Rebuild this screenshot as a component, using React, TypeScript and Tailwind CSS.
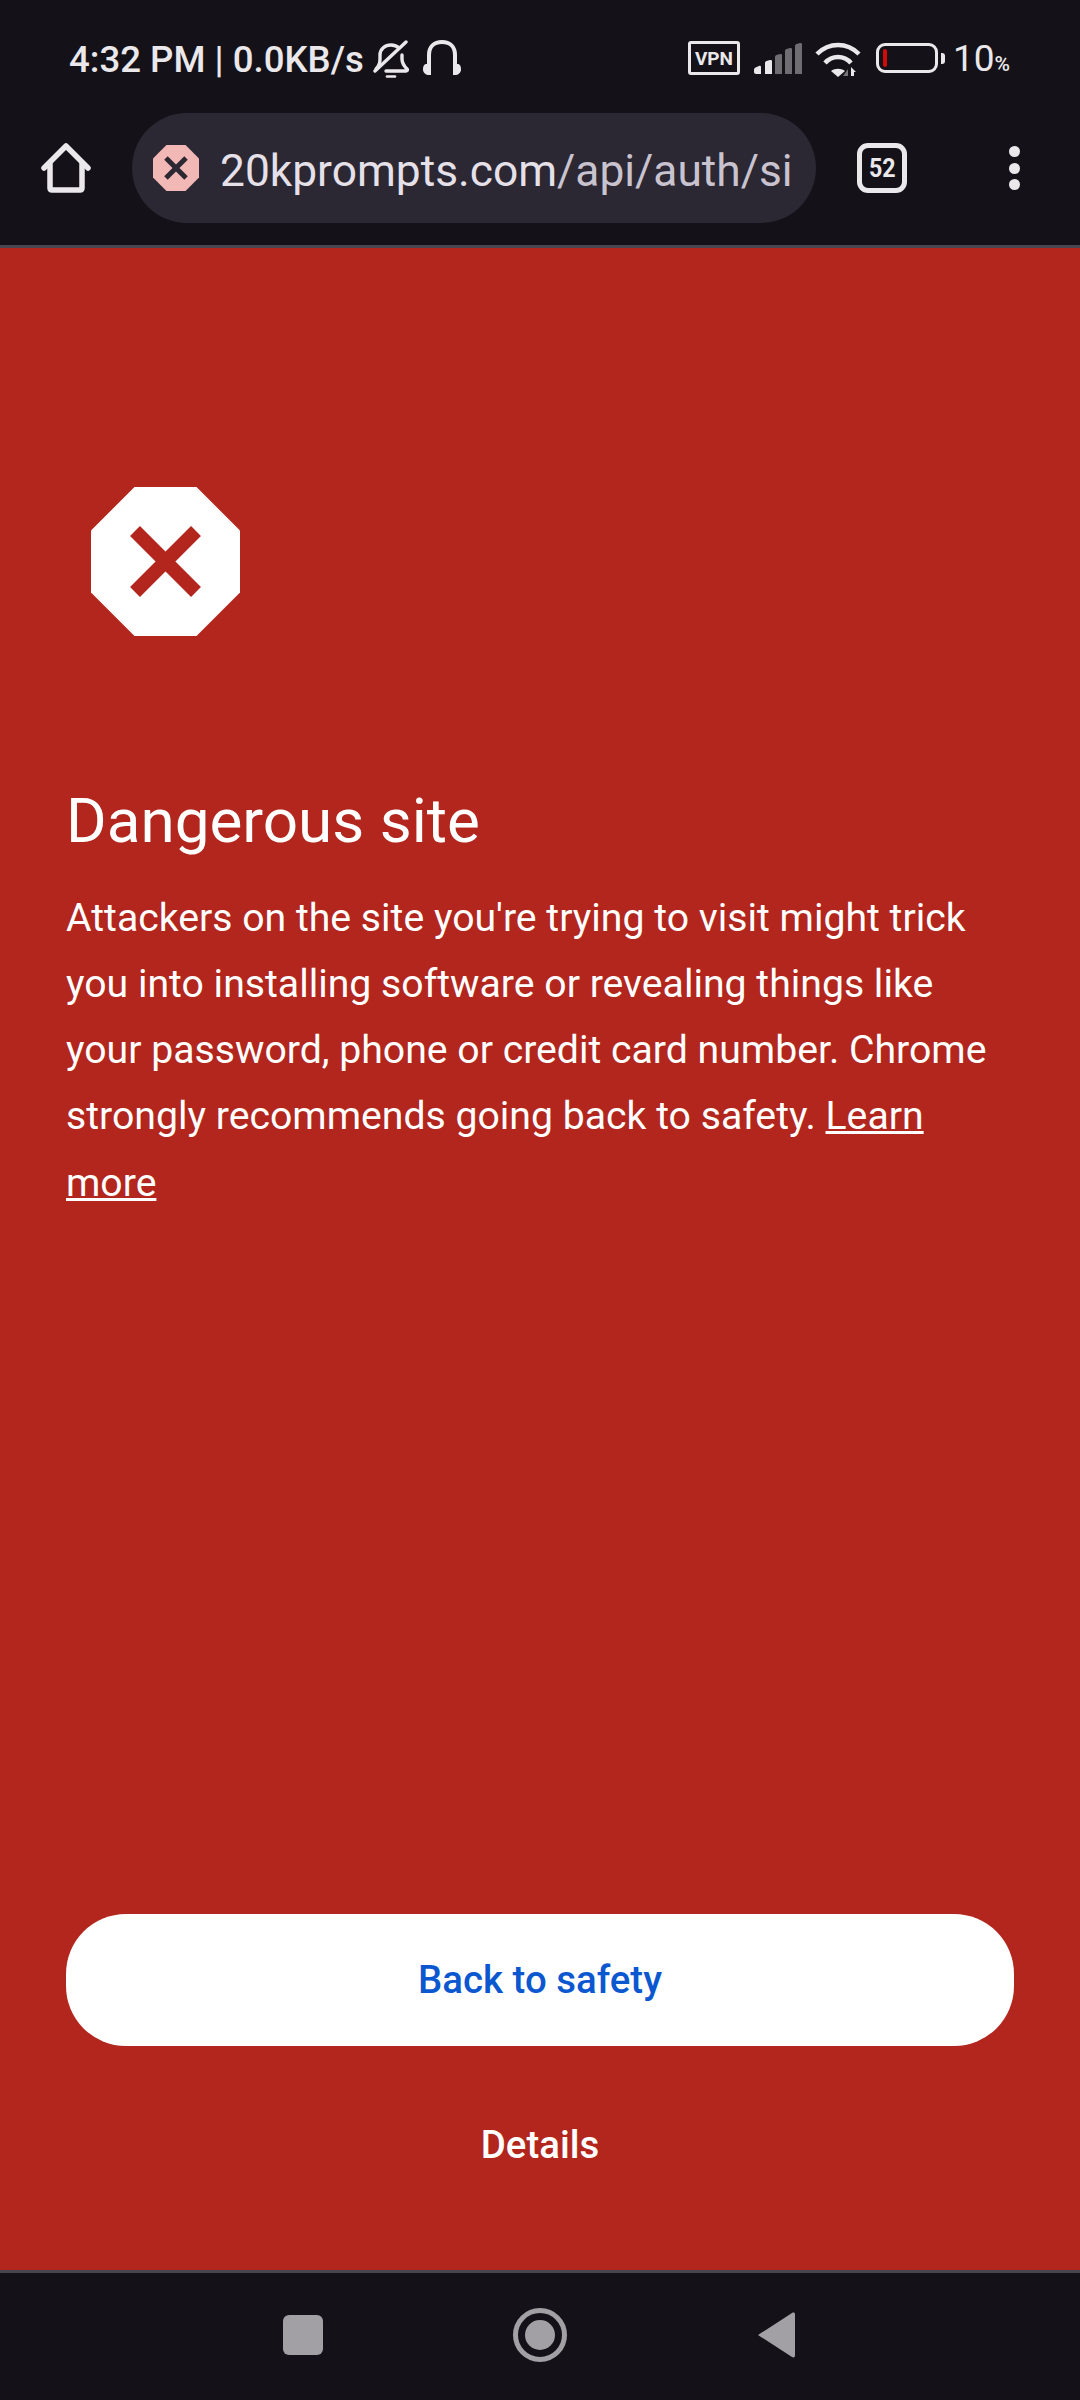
import React from 'react'

const roboto = "font-['Roboto',sans-serif]"

function BellOff() {
  return (
    <svg width="36" height="38" viewBox="0 0 36 38" fill="none" stroke="#ebe8ec" strokeWidth="3.4" strokeLinecap="round" strokeLinejoin="round">
      <path d="M3 29c3-3 4-6 4-10v-4c0-6 5-10 11-10 3 0 6 1 8 3" />
      <path d="M29 15v4c0 4 2 7 5 10 1 1 0 2-1 2H13" />
      <path d="M2 31L33 2" />
      <path d="M14 36.500h8" strokeWidth="2.6" />
    </svg>
  )
}

function Headphones() {
  return (
    <svg width="38" height="36" viewBox="0 0 38 36" fill="none">
      <path d="M6 26V15C6 7 11 2 19 2s13 5 13 13v11" stroke="#ebe8ec" strokeWidth="4" />
      <path d="M4 24h4v11h-2c-3 0-6-2-6-5.500S1 24 4 24z" fill="#ebe8ec" />
      <path d="M34 24h-4v11h2c3 0 6-2 6-5.500S37 24 34 24z" fill="#ebe8ec" />
    </svg>
  )
}

function Signal() {
  return (
    <svg width="48" height="31" viewBox="0 0 48 31">
      <path d="M0 29v-2c0-1 .5-2 1.500-2.500L5 23c1-.5 2 0 2 1v7H2c-1 0-2-1-2-2z" fill="#ebe8ec" />
      <path d="M11 31V20c0-1 .5-1.500 1.500-2l3.500-1c1-.3 2 .3 2 1v13z" fill="#ebe8ec" />
      <path d="M21 31V14c0-1 .5-1.500 1.500-2l3.500-1c1-.3 2 .3 2 1v19z" fill="#6f6d72" />
      <path d="M31 31V8c0-1 .5-1.500 1.500-2L36 5c1-.3 2 .3 2 1v25z" fill="#6f6d72" />
      <path d="M41 31V3c0-1 .5-1.500 1.500-2L46 0c1-.3 2 .3 2 1v30z" fill="#6f6d72" />
    </svg>
  )
}

function Wifi() {
  return (
    <svg width="46" height="35" viewBox="0 0 46 35" fill="none">
      <path d="M2 12C14 0 32 0 44 12" stroke="#ebe8ec" strokeWidth="4.500" />
      <path d="M10 21C17 13 29 13 36 21" stroke="#ebe8ec" strokeWidth="4.500" />
      <path d="M23 35l-7-6c4-3 10-3 14 0z" fill="#ebe8ec" />
      <path d="M33 34v-7l-5 7z" fill="#77757a" />
      <path d="M36 34v-9l5 5h-2v4z" fill="#ebe8ec" />
    </svg>
  )
}

function Battery() {
  return (
    <div className="flex items-center gap-[3px]">
      <div className="w-[62px] h-[30px] rounded-[9px] border-[3px] border-[#ebe8ec] flex items-center pl-[4px]">
        <div className="w-[4px] h-[18px] rounded-[2px] bg-[#d30a0a]" />
      </div>
      <div className="w-[4px] h-[11px] rounded-r-[3px] bg-[#ebe8ec]" />
    </div>
  )
}

function Octagon({ size, bg, cross, sw, from = 44 }: { size: number; bg: string; cross: string; sw: number; from?: number }) {
  const to = 149 - from
  return (
    <svg width={size} height={size} viewBox="0 0 149 149">
      <path d="M43.500 0h62L149 43.500v62L105.500 149h-62L0 105.500v-62z" fill={bg} />
      <path d={`M${from} ${from}L${to} ${to}M${to} ${from}L${from} ${to}`} stroke={cross} strokeWidth={sw} />
    </svg>
  )
}

function StatusBar() {
  return (
    <div className="h-[113px] flex items-start justify-between pl-[69px] pr-[70px] pt-[38px] text-[#ebe8ec]">
      <div className="flex items-center h-[44px]">
        <span className="text-[36.600px] leading-[44px] font-medium whitespace-nowrap">4:32 PM | 0.0KB/s</span>
        <div className="ml-[9px] -mt-[2px]"><BellOff /></div>
        <div className="ml-[14px] -mt-[4px]"><Headphones /></div>
      </div>
      <div className="flex items-center h-[44px] -mt-[2px]">
        <div className="w-[52px] h-[34px] rounded-[3px] border-[3px] border-[#ebe8ec] flex items-center justify-center text-[19px] leading-none font-bold">VPN</div>
        <div className="ml-[14px]"><Signal /></div>
        <div className="ml-[13px] mt-[2px]"><Wifi /></div>
        <div className="ml-[15px]"><Battery /></div>
        <div className="ml-[8px] flex items-baseline mt-[2px]">
          <span className="text-[37px] leading-[44px] font-normal">10</span>
          <span className="text-[21px] leading-none font-medium">%</span>
        </div>
      </div>
    </div>
  )
}

function Toolbar() {
  return (
    <div className="h-[135px] flex items-start border-b-[3px] border-[#49454f]">
      <div className="w-[132px] h-[110px] flex items-center justify-center">
        <svg width="50" height="50" viewBox="0 0 50 50" fill="none" stroke="#ebe8ec" strokeWidth="5.500" strokeLinejoin="round" strokeLinecap="round">
          <path d="M3 25L25 3l22 22" />
          <path d="M9 21v24q0 2 2 2h28q2 0 2-2V21" />
        </svg>
      </div>
      <div className="w-[684px] h-[110px] rounded-[55px] bg-[#2b2733] flex items-center pl-[21px] overflow-hidden">
        <div className="shrink-0 flex"><Octagon size={46} bg="#f2b8b5" cross="#2b2733" sw={16} from={42} /></div>
        <div className="ml-[21px] mt-[5px] w-[572px] overflow-hidden whitespace-nowrap text-[44.300px] leading-[56px]">
          <span className="text-[#e6e0e9]">20kprompts.com</span>
          <span className="text-[#c9c3cf]">/api/auth/signin</span>
        </div>
      </div>
      <div className="w-[132px] h-[110px] flex items-center justify-center">
        <div className="w-[50px] h-[50px] rounded-[11px] border-[5px] border-[#ebe8ec] flex items-center justify-center text-[#ebe8ec] text-[26.700px] leading-none font-bold">
          <span className="inline-block scale-x-[0.87]">52</span>
        </div>
      </div>
      <div className="w-[132px] h-[110px] flex flex-col items-center justify-center gap-[5.500px]">
        <div className="w-[11px] h-[11px] rounded-full bg-[#ebe8ec]" />
        <div className="w-[11px] h-[11px] rounded-full bg-[#ebe8ec]" />
        <div className="w-[11px] h-[11px] rounded-full bg-[#ebe8ec]" />
      </div>
    </div>
  )
}

function NavBar() {
  return (
    <div className="h-[130px] border-t-[3px] border-[#49454f] bg-[#141218] flex items-center justify-between pl-[283px] pr-[285px] pb-[3px]">
      <div className="w-[40px] h-[40px] rounded-[6px] bg-[#a2a0a4]" />
      <div className="w-[54px] h-[54px] rounded-full border-[5px] border-[#a2a0a4] flex items-center justify-center">
        <div className="w-[30px] h-[30px] rounded-full bg-[#a2a0a4]" />
      </div>
      <svg width="38" height="46" viewBox="0 0 38 46">
        <path d="M1 23L35 1c1.500-1 3-.5 3 1.500v41c0 2-1.500 2.500-3 1.500z" fill="#a2a0a4" />
      </svg>
    </div>
  )
}

export default function App() {
  return (
    <div className={`w-[1080px] h-[2400px] flex flex-col bg-[#141218] overflow-hidden ${roboto}`}>
      <StatusBar />
      <Toolbar />
      <main className="flex-1 bg-[#b2261d] flex flex-col px-[66px] text-white">
        <div className="ml-[25px] mt-[239px]">
          <Octagon size={149} bg="#ffffff" cross="#b2261d" sw={14} />
        </div>
        <h1 className="mt-[145px] text-[62px] leading-[80px] font-normal">Dangerous site</h1>
        <p className="mt-[23.500px] text-[39.200px] leading-[66.300px] font-normal">
          Attackers on the site you're trying to visit might trick you into installing software or revealing things like your password, phone or credit card number. Chrome strongly recommends going back to safety. <a className="underline">Learn more</a>
        </p>
        <div className="mt-auto h-[132px] rounded-[60px] bg-white flex items-center justify-center text-[#0b57d0] text-[38.400px] font-medium">Back to safety</div>
        <div className="mt-[68.500px] mb-[94px] h-[62px] flex items-center justify-center text-[38.400px] font-medium">Details</div>
      </main>
      <NavBar />
    </div>
  )
}
